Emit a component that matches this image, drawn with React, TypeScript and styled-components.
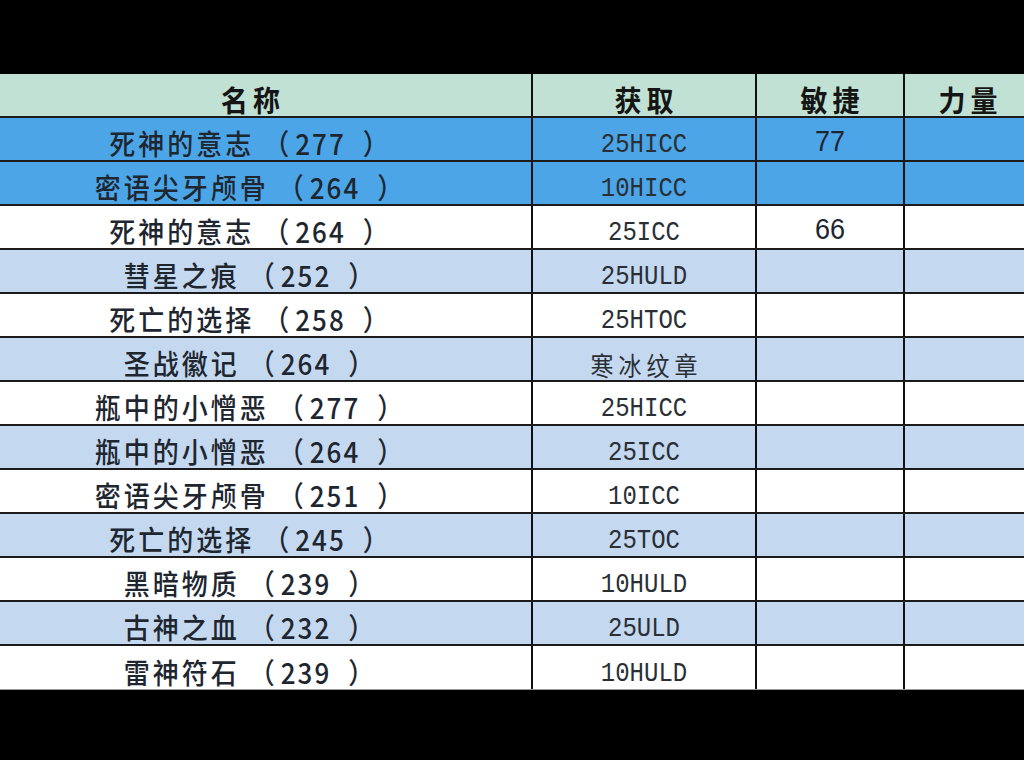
import React from "react";
import styled, { createGlobalStyle, css } from "styled-components";

type Tone = "blue" | "white" | "light";

type ItemRow = {
  name: string;
  level: string;
  source: string;
  agility?: string;
  strength?: string;
  tone: Tone;
};

const rows: ItemRow[] = [
  { name: "死神的意志", level: "277", source: "25HICC", agility: "77", tone: "blue" },
  { name: "密语尖牙颅骨", level: "264", source: "10HICC", tone: "blue" },
  { name: "死神的意志", level: "264", source: "25ICC", agility: "66", tone: "white" },
  { name: "彗星之痕", level: "252", source: "25HULD", tone: "light" },
  { name: "死亡的选择", level: "258", source: "25HTOC", tone: "white" },
  { name: "圣战徽记", level: "264", source: "寒冰纹章", tone: "light" },
  { name: "瓶中的小憎恶", level: "277", source: "25HICC", tone: "white" },
  { name: "瓶中的小憎恶", level: "264", source: "25ICC", tone: "light" },
  { name: "密语尖牙颅骨", level: "251", source: "10ICC", tone: "white" },
  { name: "死亡的选择", level: "245", source: "25TOC", tone: "light" },
  { name: "黑暗物质", level: "239", source: "10HULD", tone: "white" },
  { name: "古神之血", level: "232", source: "25ULD", tone: "light" },
  { name: "雷神符石", level: "239", source: "10HULD", tone: "white" },
];

const toneColors: Record<Tone, string> = {
  blue: "#4ba5e7",
  white: "#ffffff",
  light: "#c4d8ef",
};

const GlobalStyle = createGlobalStyle`
  html, body {
    margin: 0;
    padding: 0;
    background: #000;
  }
  body {
    font-family: "Noto Sans CJK SC", "Noto Sans", sans-serif;
  }
`;

const Screen = styled.div`
  width: 1024px;
  height: 760px;
  overflow: hidden;
  background: #000;
  padding-top: 74px;
  box-sizing: border-box;
`;

const Sheet = styled.div`
  width: 1031px;
  display: flex;
  flex-direction: column;
`;

const Row = styled.div<{ $bg: string; $last?: boolean }>`
  display: grid;
  grid-template-columns: 533px 224px 148px 126px;
  height: 44px;
  box-sizing: border-box;
  background: ${(p) => p.$bg};
  border-bottom: 2px solid #1b1b1b;
  ${(p) =>
    p.$last &&
    css`
      border-bottom: 1px solid #9a9a9a;
    `}
`;

const Cell = styled.div<{ $pad: number; $shiftLeft?: number }>`
  display: flex;
  align-items: center;
  justify-content: center;
  box-sizing: border-box;
  border-right: 2px solid #111;
  padding-top: ${(p) => p.$pad}px;
  padding-right: ${(p) => p.$shiftLeft ?? 0}px;
  white-space: nowrap;
  &:last-child {
    border-right: none;
  }
`;

const HeadText = styled.span`
  font-family: "Noto Sans CJK SC", sans-serif;
  font-weight: 700;
  font-size: 27px;
  line-height: 1;
  letter-spacing: 5px;
  margin-right: -5px;
  color: #151515;
  display: inline-block;
  transform: scaleY(1.08);
`;

const NameText = styled.span`
  font-family: "Noto Sans CJK SC", sans-serif;
  font-weight: 500;
  font-size: 26px;
  line-height: 1;
  letter-spacing: 3px;
  color: #1e2630;
  display: inline-flex;
  align-items: center;
  transform: scaleY(1.1);
`;

const Paren = styled.span<{ $open?: boolean }>`
  display: inline-block;
  margin-left: ${(p) => (p.$open ? "9px" : "17px")};
  margin-right: ${(p) => (p.$open ? "3px" : "0")};
`;

const Level = styled.span`
  letter-spacing: 2px;
`;

const SourceText = styled.span<{ $cjk?: boolean }>`
  font-family: ${(p) =>
    p.$cjk ? `"Noto Sans CJK SC", sans-serif` : `"Liberation Mono", monospace`};
  font-size: ${(p) => (p.$cjk ? "23px" : "24px")};
  line-height: 1;
  letter-spacing: ${(p) => (p.$cjk ? "5px" : "0")};
  margin-right: ${(p) => (p.$cjk ? "-5px" : "0")};
  color: #2a2f36;
  display: inline-block;
  transform: scaleY(1.12);
`;

const StatText = styled.span`
  font-family: "Liberation Sans", "Noto Sans", sans-serif;
  font-size: 27px;
  line-height: 1;
  color: #1e2630;
  display: inline-block;
  transform: scaleY(1.1);
`;

const hasCjk = (s: string) => /[\u4e00-\u9fff]/.test(s);

export default function App() {
  return (
    <>
      <GlobalStyle />
      <Screen>
        <Sheet>
          <Row $bg="#c0e1d3">
            <Cell $pad={8} $shiftLeft={30}>
              <HeadText>名称</HeadText>
            </Cell>
            <Cell $pad={8}>
              <HeadText>获取</HeadText>
            </Cell>
            <Cell $pad={8}>
              <HeadText>敏捷</HeadText>
            </Cell>
            <Cell $pad={8}>
              <HeadText>力量</HeadText>
            </Cell>
          </Row>
          {rows.map((r, i) => (
            <Row key={i} $bg={toneColors[r.tone]} $last={i === rows.length - 1}>
              <Cell $pad={8} $shiftLeft={30}>
                <NameText>
                  {r.name}
                  <Paren $open>（</Paren>
                  <Level>{r.level}</Level>
                  <Paren>）</Paren>
                </NameText>
              </Cell>
              <Cell $pad={12}>
                <SourceText $cjk={hasCjk(r.source)}>{r.source}</SourceText>
              </Cell>
              <Cell $pad={4}>{r.agility && <StatText>{r.agility}</StatText>}</Cell>
              <Cell $pad={4}>{r.strength && <StatText>{r.strength}</StatText>}</Cell>
            </Row>
          ))}
        </Sheet>
      </Screen>
    </>
  );
}
